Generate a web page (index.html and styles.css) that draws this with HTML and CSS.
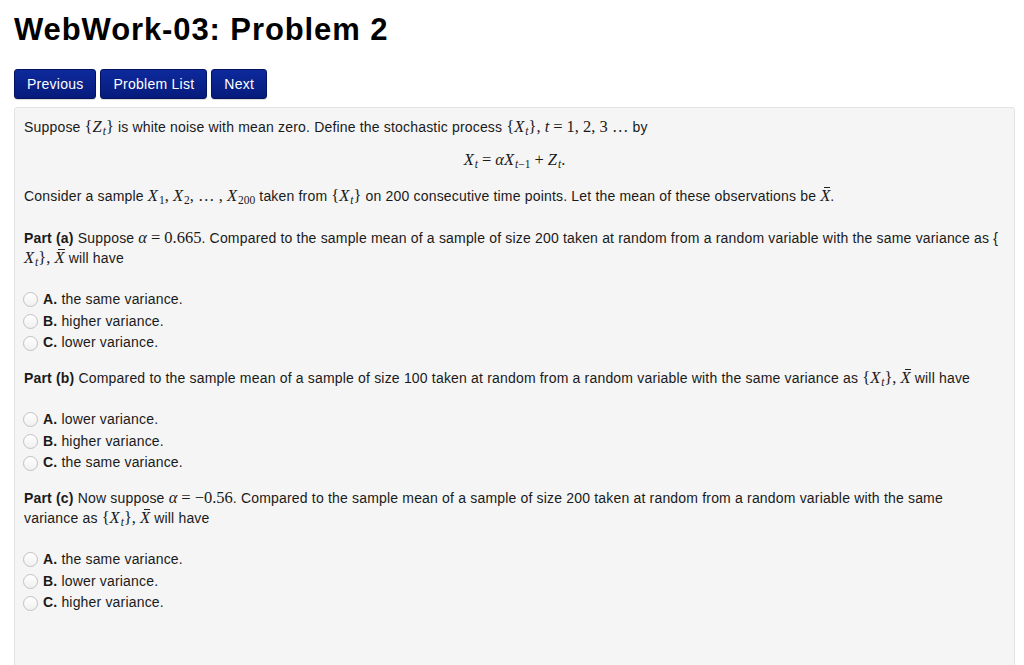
FILE: index.html
```html
<!DOCTYPE html>
<html>
<head>
<meta charset="utf-8">
<link rel="stylesheet" href="styles.css">
<title>WebWork-03: Problem 2</title>
</head>
<body>
<h1 class="title">WebWork-03: Problem 2</h1>
<nav class="nav">
  <a class="btn">Previous</a>
  <a class="btn">Problem List</a>
  <a class="btn">Next</a>
</nav>
<div class="problem">
  <p class="line">Suppose <span class="m">{<span class="i">Z</span><sub class="i">t</sub>}</span> is white noise with mean zero. Define the stochastic process <span class="m">{<span class="i">X</span><sub class="i">t</sub>}, <span class="i">t</span><span class="op">=</span>1, 2, 3 … </span> by</p>
  <p class="display"><span class="m"><span class="i">X</span><sub class="i">t</sub><span class="op">=</span><span class="i">αX</span><sub><span class="i">t</span>−1</sub><span class="op">+</span><span class="i">Z</span><sub class="i">t</sub>.</span></p>
  <p class="line para">Consider a sample <span class="m"><span class="i">X</span><sub>1</sub>, <span class="i">X</span><sub>2</sub>, … , <span class="i">X</span><sub>200</sub></span> taken from <span class="m">{<span class="i">X</span><sub class="i">t</sub>}</span> on 200 consecutive time points. Let the mean of these observations be <span class="m"><span class="i bar">X</span></span>.</p>

  <p class="line q nowrap"><b>Part (a)</b> Suppose <span class="m"><span class="i">α</span><span class="op">=</span>0.665</span>. Compared to the sample mean of a sample of size 200 taken at random from a random variable with the same variance as {<br><span class="m"><span class="i">X</span><sub class="i">t</sub>}, <span class="i bar">X</span></span> will have</p>
  <ul class="choices">
    <li><span class="radio"></span><b>A.</b> the same variance.</li>
    <li><span class="radio"></span><b>B.</b> higher variance.</li>
    <li><span class="radio"></span><b>C.</b> lower variance.</li>
  </ul>

  <p class="line q"><b>Part (b)</b> Compared to the sample mean of a sample of size 100 taken at random from a random variable with the same variance as <span class="m">{<span class="i">X</span><sub class="i">t</sub>}, <span class="i bar">X</span></span> will have</p>
  <ul class="choices">
    <li><span class="radio"></span><b>A.</b> lower variance.</li>
    <li><span class="radio"></span><b>B.</b> higher variance.</li>
    <li><span class="radio"></span><b>C.</b> the same variance.</li>
  </ul>

  <p class="line q nowrap"><b>Part (c)</b> Now suppose <span class="m"><span class="i">α</span><span class="op">=</span>−0.56</span>. Compared to the sample mean of a sample of size 200 taken at random from a random variable with the same<br>variance as <span class="m">{<span class="i">X</span><sub class="i">t</sub>}, <span class="i bar">X</span></span> will have</p>
  <ul class="choices">
    <li><span class="radio"></span><b>A.</b> the same variance.</li>
    <li><span class="radio"></span><b>B.</b> lower variance.</li>
    <li><span class="radio"></span><b>C.</b> higher variance.</li>
  </ul>
</div>
</body>
</html>
```

FILE: styles.css
```css
html, body {
  margin: 0;
  padding: 0;
  background: #ffffff;
}
body {
  padding: 0 9px 0 14px;
  font-family: "Liberation Sans", Arial, Helvetica, sans-serif;
  font-size: 14px;
  letter-spacing: 0.18px;
  color: #1a1a1a;
  overflow: hidden;
  height: 665px;
}
.title {
  margin: 13px 0 0 0;
  font-size: 31px;
  line-height: 34px;
  font-weight: bold;
  color: #000;
  letter-spacing: 0.9px;
}
.nav {
  display: flex;
  gap: 4px;
  margin-top: 22px;
}
.btn {
  display: block;
  height: 30px;
  box-sizing: border-box;
  padding: 0 12px;
  line-height: 28px;
  color: #fff;
  font-size: 14px;
  letter-spacing: 0.25px;
  background: linear-gradient(#0d2a9c, #061b7c);
  border: 1px solid #04135e;
  border-radius: 3px;
  box-shadow: 0 1px 1px rgba(0,0,0,0.15);
  cursor: pointer;
}
.problem {
  margin-top: 8px;
  background: #f5f5f5;
  border: 1px solid #e3e3e3;
  border-radius: 3px;
  padding: 9px 9px 60px 9px;
  min-height: 560px;
}
.line {
  margin: 0;
  line-height: 20px;
}
.nowrap {
  white-space: nowrap;
}
.display {
  margin: 13px 0 16px 0;
  line-height: 20px;
  text-align: center;
}
.para {
  margin-bottom: 22px;
}
.q {
  margin-bottom: 20px;
}
.m {
  font-family: "Liberation Serif", "Times New Roman", serif;
  font-size: 16.5px;
  letter-spacing: 0;
  white-space: nowrap;
  line-height: 1;
}
.i {
  font-style: italic;
}
.m sub {
  font-size: 11.5px;
  vertical-align: -3px;
  line-height: 0;
  padding-left: 1px;
}
.op {
  padding: 0 4px;
}
.bar {
  position: relative;
  display: inline-block;
  line-height: 1;
}
.bar::before {
  content: "";
  position: absolute;
  left: 4px;
  right: 0px;
  top: -1px;
  height: 1px;
  background: #222;
}
.choices {
  list-style: none;
  margin: 0 0 15px 0;
  padding: 0;
}
.choices li {
  display: flex;
  align-items: center;
  height: 21.7px;
  line-height: 20px;
}
.choices li b {
  margin-right: 4px;
}
.radio {
  display: inline-block;
  width: 15px;
  height: 15px;
  box-sizing: border-box;
  border: 1px solid #c2c2c2;
  border-radius: 50%;
  background: linear-gradient(#ffffff, #f0f0f0);
  margin: 2px 5px 0 -1px;
  flex: none;
}
```
